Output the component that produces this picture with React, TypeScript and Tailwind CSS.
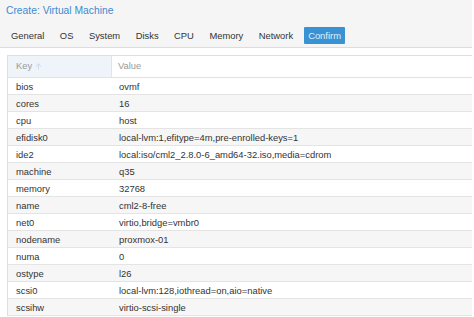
import { ArrowUp } from 'lucide-react'

const tabs = ['General', 'OS', 'System', 'Disks', 'CPU', 'Memory', 'Network']

const rows: [string, string][] = [
  ['bios', 'ovmf'],
  ['cores', '16'],
  ['cpu', 'host'],
  ['efidisk0', 'local-lvm:1,efitype=4m,pre-enrolled-keys=1'],
  ['ide2', 'local:iso/cml2_2.8.0-6_amd64-32.iso,media=cdrom'],
  ['machine', 'q35'],
  ['memory', '32768'],
  ['name', 'cml2-8-free'],
  ['net0', 'virtio,bridge=vmbr0'],
  ['nodename', 'proxmox-01'],
  ['numa', '0'],
  ['ostype', 'l26'],
  ['scsi0', 'local-lvm:128,iothread=on,aio=native'],
  ['scsihw', 'virtio-scsi-single'],
]

export default function App() {
  return (
    <div className="w-[474px] h-[317px] overflow-hidden bg-white font-['Liberation_Sans',Arial,sans-serif] text-[#333]">
      {/* Header + tabs */}
      <div className="h-[48px] bg-[#f5f5f5] border-b border-[#dcdcdc] mr-[2px]">
        <div className="h-[23px] pl-[6px] pt-[4px] text-[10.3px] leading-[13px] text-[#3d8bd0]">
          Create: Virtual Machine
        </div>
        <div className="flex items-center pl-[6px] h-[24px] text-[9.4px]">
          {tabs.map((t) => (
            <div key={t} className="px-[5px] mr-[5.5px] leading-[17px]">
              {t}
            </div>
          ))}
          <div className="px-[4.5px] leading-[17px] bg-[#3892d4] text-[#e3eef9] rounded-[1px]">
            Confirm
          </div>
        </div>
      </div>

      {/* Grid */}
      <div className="mt-[7px] ml-[7px] mr-[2px] border-t border-l border-[#dedede] text-[9.4px]">
        <div className="flex h-[22px] border-b border-[#e2e2e2] text-[#9a9a9a]">
          <div className="w-[104px] flex items-center gap-[2px] pl-[8px] bg-[#eef4fa] border-r border-[#dbe6f1]">
            Key
            <ArrowUp className="w-[9px] h-[9px] text-[#b5c8dc]" strokeWidth={1.5} />
          </div>
          <div className="flex-1 flex items-center pl-[6px]">Value</div>
        </div>
        {rows.map(([k, v], i) => (
          <div
            key={k}
            className={`flex h-[17px] items-center pt-[2px] border-b border-[#e4e4e4] ${i % 2 === 1 ? 'bg-[#f6f6f6]' : 'bg-white'}`}
          >
            <div className="w-[104px] pl-[8px]">{k}</div>
            <div className="flex-1 pl-[7px] whitespace-nowrap">{v}</div>
          </div>
        ))}
      </div>
    </div>
  )
}
